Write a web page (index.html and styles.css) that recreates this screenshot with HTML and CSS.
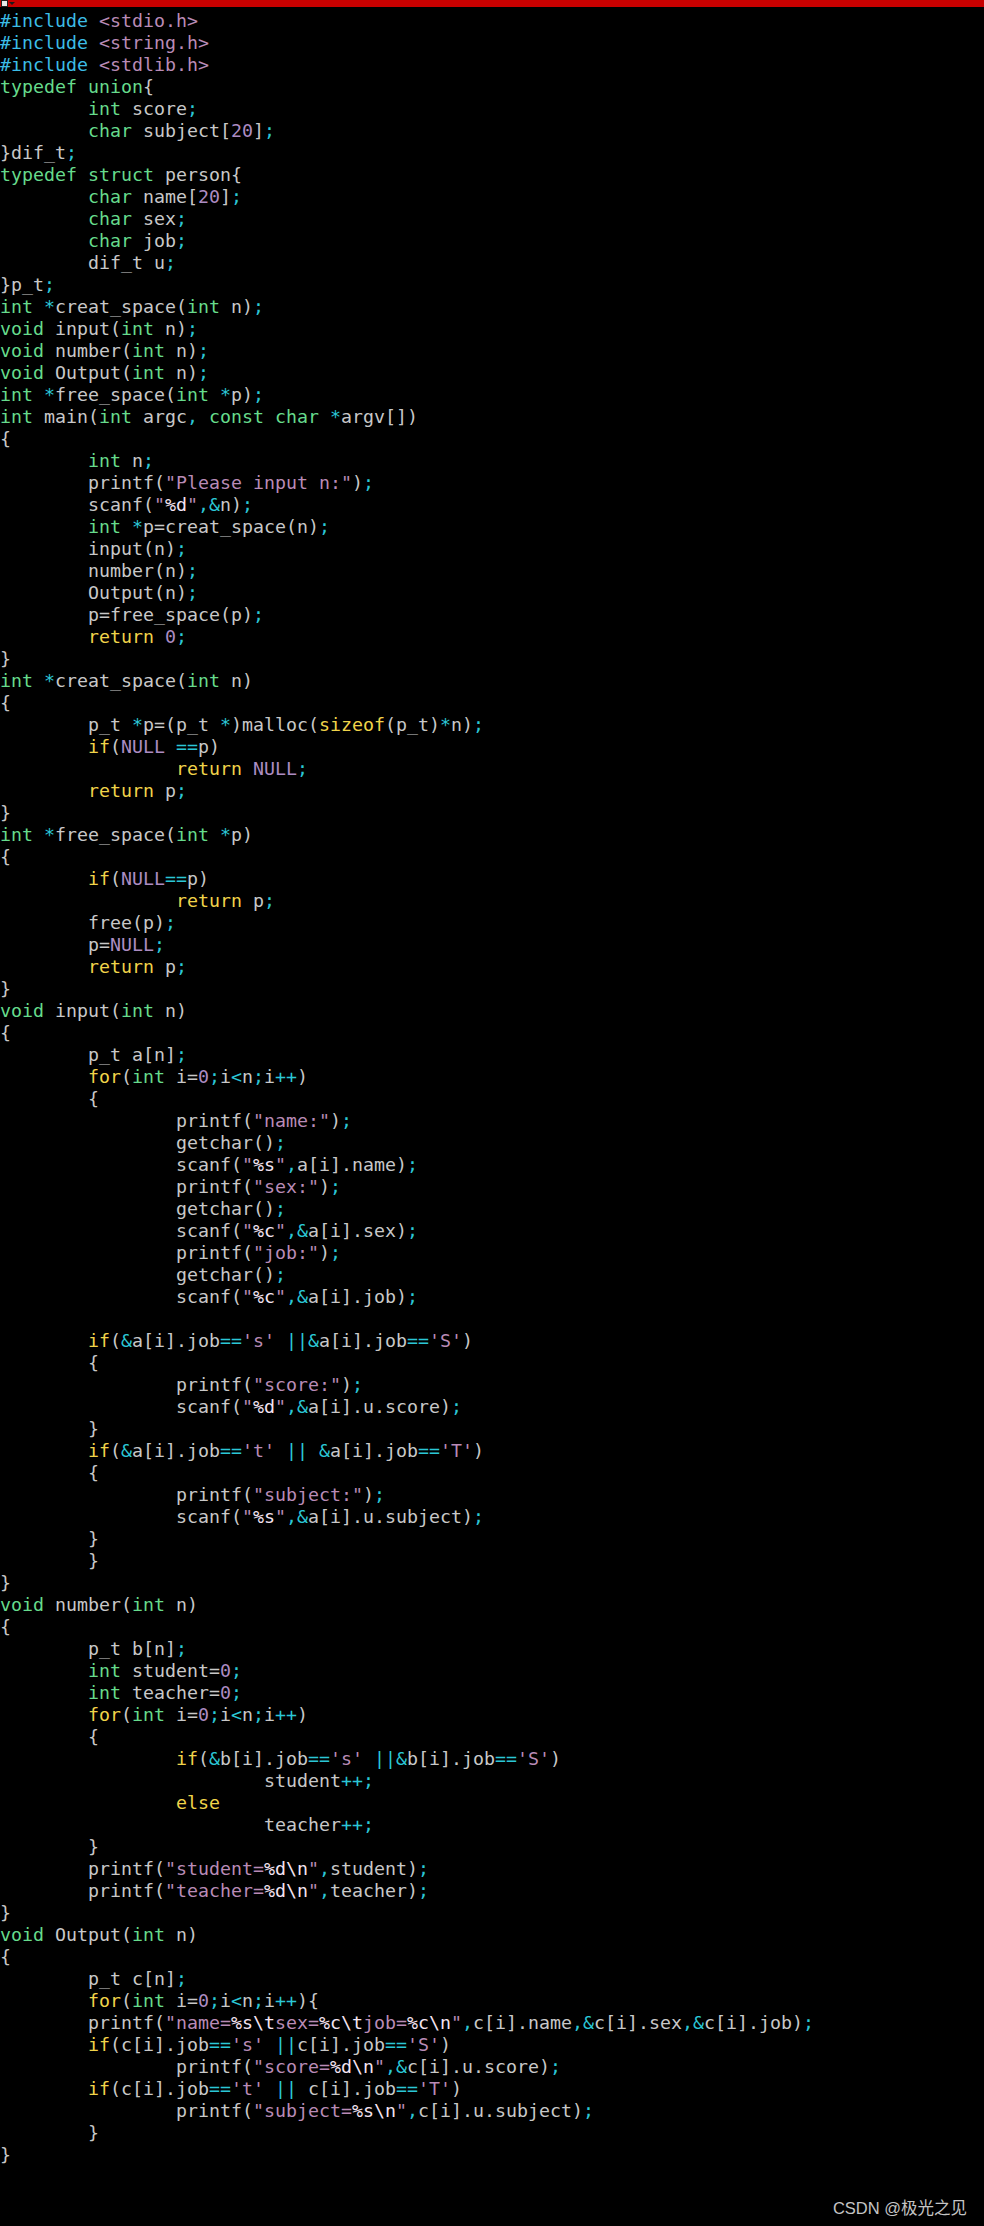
FILE: index.html
```
<!DOCTYPE html>
<html>
<head>
    <title>main.c - vim</title>
    <link rel="stylesheet" href="styles.css">
</head>
<body>
    <div class="titlebar">
        <svg class="menu-icon" width="16" height="7" viewBox="0 0 16 7">
            <rect x="1.5" y="0.5" width="6" height="6" fill="#e8e8e8" stroke="#222"/>
            <path d="M9 2h6l-3 3z" fill="#1a1a1a"/>
        </svg>
    </div>
<pre class="code"><span class="p">#include</span> <span class="s">&lt;stdio.h&gt;</span>
<span class="p">#include</span> <span class="s">&lt;string.h&gt;</span>
<span class="p">#include</span> <span class="s">&lt;stdlib.h&gt;</span>
<span class="t">typedef</span> <span class="t">union</span>{
        <span class="t">int</span> score<span class="o">;</span>
        <span class="t">char</span> subject[<span class="c">20</span>]<span class="o">;</span>
}dif_t<span class="o">;</span>
<span class="t">typedef</span> <span class="t">struct</span> person{
        <span class="t">char</span> name[<span class="c">20</span>]<span class="o">;</span>
        <span class="t">char</span> sex<span class="o">;</span>
        <span class="t">char</span> job<span class="o">;</span>
        dif_t u<span class="o">;</span>
}p_t<span class="o">;</span>
<span class="t">int</span> <span class="o">*</span>creat_space(<span class="t">int</span> n)<span class="o">;</span>
<span class="t">void</span> input(<span class="t">int</span> n)<span class="o">;</span>
<span class="t">void</span> number(<span class="t">int</span> n)<span class="o">;</span>
<span class="t">void</span> Output(<span class="t">int</span> n)<span class="o">;</span>
<span class="t">int</span> <span class="o">*</span>free_space(<span class="t">int</span> <span class="o">*</span>p)<span class="o">;</span>
<span class="t">int</span> main(<span class="t">int</span> argc<span class="o">,</span> <span class="t">const</span> <span class="t">char</span> <span class="o">*</span>argv[])
{
        <span class="t">int</span> n<span class="o">;</span>
        printf(<span class="s">"Please input n:"</span>)<span class="o">;</span>
        scanf(<span class="s">"<span class="e">%d</span>"</span><span class="o">,&amp;</span>n)<span class="o">;</span>
        <span class="t">int</span> <span class="o">*</span>p=creat_space(n)<span class="o">;</span>
        input(n)<span class="o">;</span>
        number(n)<span class="o">;</span>
        Output(n)<span class="o">;</span>
        p=free_space(p)<span class="o">;</span>
        <span class="k">return</span> <span class="c">0</span><span class="o">;</span>
}
<span class="t">int</span> <span class="o">*</span>creat_space(<span class="t">int</span> n)
{
        p_t <span class="o">*</span>p=(p_t <span class="o">*</span>)malloc(<span class="k">sizeof</span>(p_t)<span class="o">*</span>n)<span class="o">;</span>
        <span class="k">if</span>(<span class="c">NULL</span> <span class="o">==</span>p)
                <span class="k">return</span> <span class="c">NULL</span><span class="o">;</span>
        <span class="k">return</span> p<span class="o">;</span>
}
<span class="t">int</span> <span class="o">*</span>free_space(<span class="t">int</span> <span class="o">*</span>p)
{
        <span class="k">if</span>(<span class="c">NULL</span><span class="o">==</span>p)
                <span class="k">return</span> p<span class="o">;</span>
        free(p)<span class="o">;</span>
        p=<span class="c">NULL</span><span class="o">;</span>
        <span class="k">return</span> p<span class="o">;</span>
}
<span class="t">void</span> input(<span class="t">int</span> n)
{
        p_t a[n]<span class="o">;</span>
        <span class="k">for</span>(<span class="t">int</span> i=<span class="c">0</span><span class="o">;</span>i<span class="o">&lt;</span>n<span class="o">;</span>i<span class="o">++</span>)
        {
                printf(<span class="s">"name:"</span>)<span class="o">;</span>
                getchar()<span class="o">;</span>
                scanf(<span class="s">"<span class="e">%s</span>"</span><span class="o">,</span>a[i].name)<span class="o">;</span>
                printf(<span class="s">"sex:"</span>)<span class="o">;</span>
                getchar()<span class="o">;</span>
                scanf(<span class="s">"<span class="e">%c</span>"</span><span class="o">,&amp;</span>a[i].sex)<span class="o">;</span>
                printf(<span class="s">"job:"</span>)<span class="o">;</span>
                getchar()<span class="o">;</span>
                scanf(<span class="s">"<span class="e">%c</span>"</span><span class="o">,&amp;</span>a[i].job)<span class="o">;</span>

        <span class="k">if</span>(<span class="o">&amp;</span>a[i].job<span class="o">==</span><span class="s">'s'</span> <span class="o">||&amp;</span>a[i].job<span class="o">==</span><span class="s">'S'</span>)
        {
                printf(<span class="s">"score:"</span>)<span class="o">;</span>
                scanf(<span class="s">"<span class="e">%d</span>"</span><span class="o">,&amp;</span>a[i].u.score)<span class="o">;</span>
        }
        <span class="k">if</span>(<span class="o">&amp;</span>a[i].job<span class="o">==</span><span class="s">'t'</span> <span class="o">||</span> <span class="o">&amp;</span>a[i].job<span class="o">==</span><span class="s">'T'</span>)
        {
                printf(<span class="s">"subject:"</span>)<span class="o">;</span>
                scanf(<span class="s">"<span class="e">%s</span>"</span><span class="o">,&amp;</span>a[i].u.subject)<span class="o">;</span>
        }
        }
}
<span class="t">void</span> number(<span class="t">int</span> n)
{
        p_t b[n]<span class="o">;</span>
        <span class="t">int</span> student=<span class="c">0</span><span class="o">;</span>
        <span class="t">int</span> teacher=<span class="c">0</span><span class="o">;</span>
        <span class="k">for</span>(<span class="t">int</span> i=<span class="c">0</span><span class="o">;</span>i<span class="o">&lt;</span>n<span class="o">;</span>i<span class="o">++</span>)
        {
                <span class="k">if</span>(<span class="o">&amp;</span>b[i].job<span class="o">==</span><span class="s">'s'</span> <span class="o">||&amp;</span>b[i].job<span class="o">==</span><span class="s">'S'</span>)
                        student<span class="o">++;</span>
                <span class="k">else</span>
                        teacher<span class="o">++;</span>
        }
        printf(<span class="s">"student=<span class="e">%d\n</span>"</span><span class="o">,</span>student)<span class="o">;</span>
        printf(<span class="s">"teacher=<span class="e">%d\n</span>"</span><span class="o">,</span>teacher)<span class="o">;</span>
}
<span class="t">void</span> Output(<span class="t">int</span> n)
{
        p_t c[n]<span class="o">;</span>
        <span class="k">for</span>(<span class="t">int</span> i=<span class="c">0</span><span class="o">;</span>i<span class="o">&lt;</span>n<span class="o">;</span>i<span class="o">++</span>){
        printf(<span class="s">"name=<span class="e">%s\t</span>sex=<span class="e">%c\t</span>job=<span class="e">%c\n</span>"</span><span class="o">,</span>c[i].name<span class="o">,&amp;</span>c[i].sex<span class="o">,&amp;</span>c[i].job)<span class="o">;</span>
        <span class="k">if</span>(c[i].job<span class="o">==</span><span class="s">'s'</span> <span class="o">||</span>c[i].job<span class="o">==</span><span class="s">'S'</span>)
                printf(<span class="s">"score=<span class="e">%d\n</span>"</span><span class="o">,&amp;</span>c[i].u.score)<span class="o">;</span>
        <span class="k">if</span>(c[i].job<span class="o">==</span><span class="s">'t'</span> <span class="o">||</span> c[i].job<span class="o">==</span><span class="s">'T'</span>)
                printf(<span class="s">"subject=<span class="e">%s\n</span>"</span><span class="o">,</span>c[i].u.subject)<span class="o">;</span>
        }
}</pre>
    <div class="watermark">CSDN @极光之见</div>
</body>
</html>
```

FILE: styles.css
```
html, body {
    height: 2226px;
}
body {
    margin: 0;
    position: relative;
    overflow: hidden;
    background-color: #000;
    color: #c8c8c8;
}
.titlebar {
    height: 7px;
    background-color: #c80000;
    display: flex;
    align-items: flex-start;
}
.menu-icon {
    display: block;
}
.code {
    margin: 3px 0 0 0;
    font-family: "DejaVu Sans Mono", monospace;
    font-size: 18.27px;
    line-height: 22px;
    white-space: pre;
}
.p {
    color: #3cbde6;
}
.t {
    color: #66db8c;
}
.k {
    color: #f0d44a;
}
.o {
    color: #2bc7d6;
}
.s {
    color: #b98bb6;
}
.c {
    color: #ac8cc2;
}
.e {
    color: #f4e4f2;
}
.watermark {
    position: absolute;
    right: 17px;
    bottom: 9px;
    font-family: "Liberation Sans", "Noto Sans CJK SC", sans-serif;
    font-size: 16.5px;
    line-height: 18px;
    color: #c4c4c4;
}
```
